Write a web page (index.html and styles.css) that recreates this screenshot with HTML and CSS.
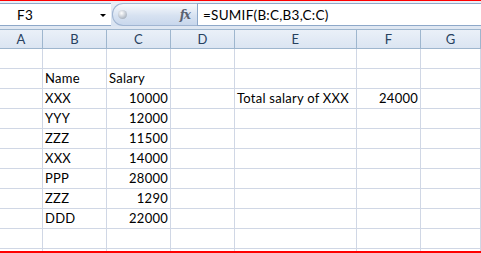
FILE: index.html
```html
<!DOCTYPE html>
<html>
<head>
<meta charset="utf-8">
<link rel="stylesheet" href="styles.css">
</head>
<body>
<div class="app">
  <div class="fbar">
    <div class="namebox">
      <span class="ref">F3</span>
      <span class="arrow"></span>
    </div>
    <div class="pill">
      <span class="knob"></span>
      <span class="fx">fx</span>
    </div>
    <div class="formula">=SUMIF(B:C,B3,C:C)</div>
  </div>
  <div class="gap"></div>
  <div class="sheet">
    <div class="hd">A</div><div class="hd">B</div><div class="hd">C</div><div class="hd">D</div><div class="hd">E</div><div class="hd">F</div><div class="hd">G</div>

    <div class="c"></div><div class="c"></div><div class="c"></div><div class="c"></div><div class="c"></div><div class="c"></div><div class="c"></div>

    <div class="c"></div><div class="c">Name</div><div class="c">Salary</div><div class="c"></div><div class="c"></div><div class="c"></div><div class="c"></div>

    <div class="c"></div><div class="c">XXX</div><div class="c n">10000</div><div class="c"></div><div class="c">Total salary of XXX</div><div class="c n">24000</div><div class="c"></div>

    <div class="c"></div><div class="c">YYY</div><div class="c n">12000</div><div class="c"></div><div class="c"></div><div class="c"></div><div class="c"></div>

    <div class="c"></div><div class="c">ZZZ</div><div class="c n">11500</div><div class="c"></div><div class="c"></div><div class="c"></div><div class="c"></div>

    <div class="c"></div><div class="c">XXX</div><div class="c n">14000</div><div class="c"></div><div class="c"></div><div class="c"></div><div class="c"></div>

    <div class="c"></div><div class="c">PPP</div><div class="c n">28000</div><div class="c"></div><div class="c"></div><div class="c"></div><div class="c"></div>

    <div class="c"></div><div class="c">ZZZ</div><div class="c n">1290</div><div class="c"></div><div class="c"></div><div class="c"></div><div class="c"></div>

    <div class="c"></div><div class="c">DDD</div><div class="c n">22000</div><div class="c"></div><div class="c"></div><div class="c"></div><div class="c"></div>

    <div class="c"></div><div class="c"></div><div class="c"></div><div class="c"></div><div class="c"></div><div class="c"></div><div class="c"></div>

    <div class="c"></div><div class="c"></div><div class="c"></div><div class="c"></div><div class="c"></div><div class="c"></div><div class="c"></div>
  </div>
  <div class="redline"></div>
</div>
</body>
</html>
```
FILE: styles.css
```css
html, body {
  margin: 0;
  padding: 0;
  background: #ffffff;
}
.app {
  width: 481px;
  height: 253px;
  overflow: hidden;
  position: relative;
  font-family: Lato, "Open Sans", sans-serif;
  font-size: 13px;
  letter-spacing: 0.25px;
  color: #000;
  border-top: 1px solid #ff0000;
  box-sizing: border-box;
}
.fbar {
  height: 25px;
  background: linear-gradient(#e9eef6, #d8e3f1);
  display: flex;
  align-items: stretch;
  padding-top: 2px;
  box-sizing: border-box;
}
.namebox {
  width: 111px;
  background: #fff;
  border-top: 1px solid #8ea8c9;
  border-bottom: 1px solid #8ea8c9;
  display: flex;
  align-items: center;
  box-sizing: border-box;
  position: relative;
}
.ref {
  margin-left: 17px;
  font-size: 13.5px;
}
.arrow {
  position: absolute;
  left: 100px;
  top: 10px;
  width: 0;
  height: 0;
  border-left: 3px solid transparent;
  border-right: 3px solid transparent;
  border-top: 3px solid #000;
}
.pill {
  width: 85px;
  margin-left: 1px;
  border: 1px solid #a0b5d2;
  border-right: none;
  border-radius: 11px 0 0 11px;
  background: linear-gradient(#f7f9fc, #d7e2f1 55%, #c8d7ec);
  display: flex;
  align-items: center;
  box-sizing: border-box;
  position: relative;
}
.knob {
  width: 9px;
  height: 9px;
  border-radius: 50%;
  margin-left: 5px;
  background: radial-gradient(circle at 40% 35%, #ffffff, #b9c1cc 60%, #8f99a6);
}
.fx {
  margin-left: auto;
  margin-right: 7px;
  font-family: "DejaVu Serif", "Liberation Serif", serif;
  font-style: italic;
  font-weight: bold;
  font-size: 12px;
  color: #5a6270;
  letter-spacing: -1px;
}
.formula {
  flex: 1;
  background: #fff;
  border: 1px solid #8ea8c9;
  border-right: none;
  display: flex;
  align-items: center;
  padding-left: 5px;
  box-sizing: border-box;
  font-size: 13.5px;
}
.gap {
  height: 3px;
  background: #dfe7f2;
}
.sheet {
  display: grid;
  grid-template-columns: 43px 64px 64px 64px 122px 64px 60px;
  grid-auto-rows: 20px;
}
.hd {
  background: linear-gradient(#eaf0f8, #dbe5f2);
  border-top: 1px solid #9eb6ce;
  border-right: 1px solid #9eb6ce;
  border-bottom: 1px solid #9eb6ce;
  color: #27415f;
  display: flex;
  align-items: center;
  justify-content: center;
  box-sizing: border-box;
}
.c {
  border-right: 1px solid #d0d7e5;
  border-bottom: 1px solid #d0d7e5;
  box-sizing: border-box;
  display: flex;
  align-items: flex-end;
  padding: 0 2px 2px 2px;
  line-height: 15px;
  white-space: nowrap;
  overflow: visible;
}
.n {
  justify-content: flex-end;
}
.redline {
  position: absolute;
  left: 0;
  right: 0;
  bottom: 0;
  height: 2px;
  background: #ff0000;
}
```
